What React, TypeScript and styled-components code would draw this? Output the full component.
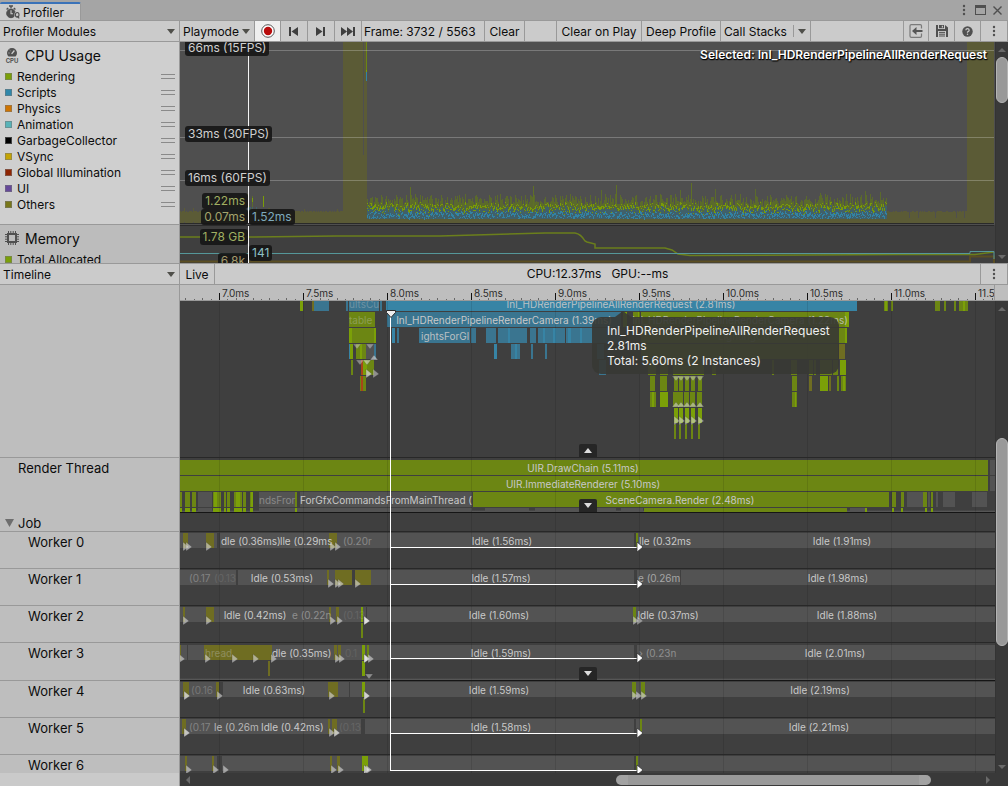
import React from "react";
import styled, { createGlobalStyle, css } from "styled-components";

const C = {
  green: "#6c8613",
  lime: "#7ba008",
  olive: "#6f6d22",
  idle: "#535353",
  bg: "#3f3f3f",
  blue: "#3a7590",
  sky: "#3784a5",
  red: "#a8451a",
  line: "#999999",
  bar: "#cbcbcb",
};

const Global = createGlobalStyle`
  * { box-sizing: border-box; }
  html, body { margin: 0; padding: 0; }
  body { font-family: Inter, "Liberation Sans", sans-serif; font-size: 12px; color: #0c0c0c; background: #3f3f3f; overflow: hidden; }
  button, select { font: inherit; color: inherit; margin: 0; border: 0; background: none; }
  svg { display: block; }
`;

/* ---------- window frame ---------- */
const Window = styled.main`
  display: flex;
  flex-direction: column;
  height: 100vh;
  min-width: 900px;
`;
const TabBar = styled.header`
  display: flex;
  justify-content: space-between;
  height: 20px;
  flex: none;
  background: #a5a5a5;
`;
const Tab = styled.button`
  display: flex;
  align-items: center;
  gap: 3px;
  width: 81px;
  margin-top: 2px;
  padding: 0 0 0 6px;
  background: ${C.bar};
  border-top: 2px solid #3a72b8;
  border-right: 1px solid ${C.line};
  border-radius: 2px 2px 0 0;
`;
const WindowButtons = styled.div`
  display: flex;
  align-items: center;
  gap: 6px;
  padding-right: 5px;
`;
const PlainButton = styled.button`
  display: flex;
  align-items: center;
  justify-content: center;
  padding: 0;
  min-width: 11px;
`;

/* ---------- toolbars ---------- */
const Toolbar = styled.div`
  display: flex;
  height: 22px;
  flex: none;
  background: ${C.bar};
  border-top: 1px solid ${C.line};
  border-bottom: 1px solid ${C.line};
`;
const ToolButton = styled.button<{ $w: number; $on?: boolean }>`
  display: flex;
  align-items: center;
  justify-content: center;
  width: ${(p) => p.$w}px;
  padding: 0;
  white-space: nowrap;
  border-right: 1px solid ${C.line};
  background: ${(p) => (p.$on ? "#efefef" : "transparent")};
`;
const Readout = styled.div`
  width: 123px;
  padding-left: 2px;
  line-height: 21px;
  white-space: nowrap;
  border-right: 1px solid ${C.line};
`;
const Filler = styled.div<{ $w?: number }>`
  ${(p) => (p.$w ? css`width: ${p.$w}px;` : css`flex: 1;`)}
  border-right: 1px solid ${C.line};
`;
const SelectBox = styled.label<{ $w: number }>`
  display: flex;
  align-items: center;
  width: ${(p) => p.$w}px;
  padding-right: 4px;
  border-right: 1px solid ${C.line};
`;
const Select = styled.select`
  appearance: none;
  flex: 1;
  min-width: 0;
  height: 20px;
  padding: 0 0 0 3px;
  outline: none;
`;
const CaretButton = styled.button`
  display: flex;
  align-items: center;
  width: 17px;
  padding: 0 0 0 4px;
  border-right: 1px solid ${C.line};
`;
const SplitButton = styled.button`
  position: relative;
  width: 73px;
  padding: 0 0 0 3px;
  text-align: left;
  white-space: nowrap;
  &::after {
    content: "";
    position: absolute;
    right: 0;
    top: 4px;
    bottom: 4px;
    border-right: 1px solid ${C.line};
  }
`;
const Summary = styled.div`
  flex: 1;
  text-align: center;
  line-height: 20px;
  white-space: pre;
  border-right: 1px solid ${C.line};
`;

/* ---------- module area ---------- */
const Modules = styled.section`
  display: flex;
  height: 221px;
  flex: none;
`;
const ModuleList = styled.div`
  flex: 1;
  min-width: 0;
  overflow: hidden;
`;
const Module = styled.article<{ $h: number; $selected?: boolean }>`
  display: flex;
  height: ${(p) => p.$h}px;
  background: ${(p) => (p.$selected ? "#cfcfcf" : "#bcbcbc")};
`;
const Legend = styled.div<{ $line?: boolean }>`
  width: 180px;
  flex: none;
  padding-left: 5px;
  border-right: 1px solid ${C.line};
  border-bottom: ${(p) => (p.$line ? `1px solid ${C.line}` : "0")};
`;
const ModuleTitle = styled.h2`
  display: flex;
  align-items: center;
  gap: 6px;
  height: 26px;
  margin: 0;
  font-size: 14px;
  font-weight: 400;
`;
const Series = styled.div`
  display: flex;
  align-items: center;
  height: 16px;
  gap: 5px;
  padding-right: 4px;
`;
const Swatch = styled.i<{ $c: string }>`
  width: 7px;
  height: 7px;
  background: ${(p) => p.$c};
  border: 1px solid #77777788;
`;
const SeriesName = styled.span`
  flex: 1;
  white-space: nowrap;
`;
const Grip = styled.i`
  width: 14px;
  height: 5px;
  border: solid #8a8a8a;
  border-width: 1px 0;
`;
const ChartBox = styled.div<{ $bg: string }>`
  position: relative;
  flex: 1;
  min-width: 0;
  overflow: hidden;
  background: ${(p) => p.$bg};
`;
const Badge = styled.span<{ $x: number; $y: number; $c?: string; $left?: boolean }>`
  position: absolute;
  top: ${(p) => p.$y}px;
  ${(p) => (p.$left ? css`right: calc(100% - ${p.$x}px);` : css`left: ${p.$x}px;`)}
  height: 16px;
  line-height: 16px;
  padding: 0 3px;
  border-radius: 3px;
  background: #161616e8;
  color: ${(p) => p.$c || "#d0d0d0"};
  white-space: nowrap;
`;
const SelectedName = styled.strong`
  position: absolute;
  top: 5px;
  right: 8px;
  line-height: 16px;
  font-weight: 600;
  color: #fff;
  text-shadow: 1px 1px 1px #000, 0 1px 1px #000;
`;

/* ---------- scrollbars ---------- */
const VScroll = styled.div`
  display: flex;
  flex-direction: column;
  align-items: flex-end;
  width: 13px;
  flex: none;
  position: relative;
  background: #393939;
  border-left: 1px solid #343434;
`;
const Arrow = styled.i<{ $d: "up" | "down" | "left" | "right" }>`
  width: 0;
  height: 0;
  border: 4px solid transparent;
  ${(p) => p.$d === "up" && css`border-width: 0 4px 4px; border-bottom-color: #6a6a6a; margin: 6px 2px 5px;`}
  ${(p) => p.$d === "down" && css`border-width: 4px 4px 0; border-top-color: #6a6a6a; margin: auto 2px 4px;`}
  ${(p) => p.$d === "left" && css`border-width: 4px 4px 4px 0; border-right-color: #6a6a6a; margin-left: 6px;`}
  ${(p) => p.$d === "right" && css`border-width: 4px 0 4px 4px; border-left-color: #6a6a6a; margin-right: 5px;`}
`;
const VThumb = styled.div<{ $top: string; $h: string }>`
  position: absolute;
  top: ${(p) => p.$top};
  right: 0;
  width: 12px;
  height: ${(p) => p.$h};
  border-radius: 6px;
  border: 1px solid #b4b4b4;
  background: #999;
`;
const HScroll = styled.div`
  position: relative;
  display: flex;
  flex: 1;
  align-items: center;
  justify-content: space-between;
`;
const HThumb = styled.div`
  position: absolute;
  left: 53.5%;
  top: 2px;
  width: 38.7%;
  height: 10px;
  border-radius: 5px;
  border: solid #a2a2a2;
  border-width: 0 12px;
  background: #999;
`;

/* ---------- timeline ---------- */
const RulerRow = styled.div`
  display: flex;
  height: 16px;
  flex: none;
  background: #bebebe;
`;
const RulerGutter = styled.div`
  width: 180px;
  border-right: 1px solid ${C.line};
`;
const Ruler = styled.div`
  flex: 1;
  min-width: 0;
  border-bottom: 1px solid ${C.line};
  border-right: 1px solid ${C.line};
`;
const Corner = styled.div`
  width: 13px;
  border-bottom: 1px solid ${C.line};
`;
const Body = styled.section`
  display: flex;
  flex: 1;
  min-height: 0;
`;
const Tracks = styled.div`
  position: relative;
  flex: 1;
  min-width: 0;
  overflow: hidden;
`;
const Track = styled.div<{ $h: number }>`
  display: flex;
  height: ${(p) => p.$h}px;
`;
const TrackLabel = styled.div<{ $indent: number; $line?: boolean }>`
  display: flex;
  align-items: flex-start;
  width: 180px;
  flex: none;
  padding: 1px 0 0 ${(p) => p.$indent}px;
  line-height: 18px;
  font-size: 13px;
  white-space: nowrap;
  background: #bebebe;
  border-right: 1px solid ${C.line};
  border-bottom: ${(p) => (p.$line === false ? "0" : `1px solid ${C.line}`)};
`;
const Fold = styled.button`
  padding: 0;
  margin: 5px 4px 0 5px;
`;
const Lane = styled.div<{ $heavy?: boolean }>`
  position: relative;
  flex: 1;
  min-width: 0;
  background: ${(p) => (p.$heavy ? `linear-gradient(transparent calc(100% - 2px), #5e5e5e) ${C.bg}` : C.bg)};
  border-bottom: 1px solid ${(p) => (p.$heavy ? "#151515" : "#282828")};
`;
const Expander = styled.button`
  position: absolute;
  z-index: 2;
  left: 50%;
  bottom: 0;
  width: 18px;
  height: 13px;
  margin-left: -9px;
  padding: 0;
  display: flex;
  align-items: center;
  justify-content: center;
  background: #262626;
  border-radius: 2px 2px 0 0;
`;
const Overlay = styled.svg`
  position: absolute;
  inset: 0;
  z-index: 1;
  pointer-events: none;
`;
const Tooltip = styled.div`
  position: absolute;
  z-index: 3;
  left: 592px;
  top: 16px;
  padding: 6px 9px 6px 15px;
  line-height: 15px;
  color: #f0f0f0;
  background: #383935e8;
  border-radius: 9px;
  white-space: nowrap;
  &::before {
    content: "";
    position: absolute;
    left: 23px;
    top: -6px;
    border: solid transparent;
    border-width: 0 8px 6px;
    border-bottom-color: #383935e8;
  }
`;
const Footer = styled.footer`
  display: flex;
  height: 13px;
  flex: none;
  background: #393939;
`;
const FooterGutter = styled.div`
  width: 180px;
  background: #cacaca;
  border-right: 1px solid ${C.line};
`;
const FooterCorner = styled.div`
  width: 13px;
`;

/* ---------- small drawings ---------- */
const Caret = ({ up, fill = "#4f4f4a" }: { up?: boolean; fill?: string }) => (
  <svg width="8" height="5" aria-hidden>
    <path d={up ? "M0 5 4 0 8 5Z" : "M0 0H8L4 5Z"} fill={fill} />
  </svg>
);
const Dots = () => (
  <svg width="4" height="12" fill="#4f4f4f" aria-hidden>
    <circle cx="2" cy="2" r="1.2" /><circle cx="2" cy="6" r="1.2" /><circle cx="2" cy="10" r="1.2" />
  </svg>
);
const ProfilerIcon = () => (
  <svg width="14" height="15" viewBox="0 0 14 15" fill="none" stroke="#4f4f4f" aria-hidden>
    <circle cx="5" cy="8.4" r="4.3" fill="#4f4f4f" />
    <path d="M3 1h4M5 1.300v2M.6 4.600 2.200 3M9.400 4.600 7.800 3" strokeWidth="1.4" />
    <path d="M5 5.200v3.600h2" stroke="#cbcbcb" strokeWidth="1.1" />
    <ellipse cx="11.200" cy="9.800" rx="2.800" ry="3.400" fill="#cbcbcb" stroke="none" />
    <ellipse cx="11.200" cy="9.800" rx="1.800" ry="2.300" strokeWidth="1.1" />
    <path d="M11.200 11 13.200 13.400" strokeWidth="1.1" />
  </svg>
);
const CpuIcon = () => (
  <svg width="14" height="16" viewBox="0 0 14 16" overflow="visible" aria-hidden>
    <path d="M3.500 9.500A5 5 0 1 1 10.500 9.500Z" fill="#505050" />
    <path d="M6.600 6.900 9.400 3.500" stroke="#cfcfcf" strokeWidth="1.300" />
    <path d="M3.400 6h1.200M4.700 3l.7.7" stroke="#cfcfcf" strokeWidth=".8" />
    <text x="7" y="15.500" fontSize="6" fontWeight="700" textAnchor="middle" fill="#505050">CPU</text>
  </svg>
);
const MemoryIcon = () => (
  <svg width="14" height="14" viewBox="0 0 14 14" fill="none" stroke="#505050" aria-hidden>
    <rect x="3" y="3" width="8" height="8" strokeWidth="2" />
    <path d="M3.500 0V2.400M5.800 0V2.400M8.200 0V2.400M10.500 0V2.400M3.500 11.600V14M5.800 11.600V14M8.200 11.600V14M10.500 11.600V14M0 3.500H2.400M0 5.800H2.400M0 8.200H2.400M0 10.500H2.400M11.600 3.500H14M11.600 5.800H14M11.600 8.200H14M11.600 10.500H14" />
  </svg>
);
const RecordIcon = () => (
  <svg width="14" height="14" viewBox="0 0 14 14" aria-hidden>
    <circle cx="7" cy="7" r="6.3" fill="#fff" stroke="#555" />
    <circle cx="7" cy="7" r="4.2" fill="#b80c0c" />
  </svg>
);
const StepIcon = ({ kind }: { kind: "prev" | "next" | "last" }) => (
  <svg width={kind === "last" ? 14 : 10} height="9" fill="#3f3f3f" aria-hidden>
    {kind === "prev" && <path d="M0 0H2V9H0ZM9 0V9L2.5 4.5Z" />}
    {kind === "next" && <path d="M0 0V9L6.5 4.5ZM7 0H9V9H7Z" />}
    {kind === "last" && <path d="M0 0V9L6 4.5ZM6 0V9L12 4.5ZM12 0H14V9H12Z" />}
  </svg>
);
const LoadIcon = () => (
  <svg width="14" height="14" viewBox="0 0 14 14" fill="none" stroke="#555" aria-hidden>
    <path d="M12.5 4.5V2Q12.5.7 11.2.7H2.3Q1 .7 1 2V12Q1 13.3 2.3 13.3H11.2Q12.5 13.3 12.5 12V9.5" stroke="#7a7a7a" strokeWidth="1.2" />
    <path d="M13.5 7H6" strokeWidth="2" /><path d="M3 7 7.5 3V11Z" fill="#555" stroke="none" />
  </svg>
);
const SaveIcon = () => (
  <svg width="12" height="12" viewBox="0 0 12 12" aria-hidden>
    <path d="M0 0H2V4H9V0L12 2.5V12H0Z" fill="#505050" />
    <path d="M3 0H8V3.2H3Z" fill="#505050" /><path d="M5.8 .8H7V2.6H5.8Z" fill="#cbcbcb" />
    <path d="M2 6H10V12H2Z" fill="#cbcbcb" /><path d="M3 7.4H9M3 9.2H9M3 11H9" stroke="#505050" />
  </svg>
);
const HelpIcon = () => (
  <svg width="11" height="11" viewBox="0 0 11 11" aria-hidden>
    <circle cx="5.5" cy="5.5" r="5.2" fill="#505050" />
    <path d="M3.8 4.3Q3.9 2.7 5.5 2.7T7.2 4.2Q7.2 5 5.5 6V6.8" fill="none" stroke="#cbcbcb" strokeWidth="1.2" />
    <circle cx="5.5" cy="8.3" r=".75" fill="#cbcbcb" />
  </svg>
);

/* ---------- charts ---------- */
const rng = (seed: number) => () => {
  seed = (seed * 1664525 + 1013904223) % 4294967296;
  return seed / 4294967296;
};

function buildCpu() {
  const r = rng(7);
  const out = { base: "", dimGreen: "", dimBlue: "", lime: "", blue: "" };
  const col = (x: number, y: number, h: number) => `M${x} ${y}h1v${h}h-1z`;
  for (let x = 180; x < 343; x++) {
    out.base += col(x, 211 + Math.floor(r() * 2) - (r() > 0.93 ? 3 : 0), 14);
    if (x > 222 && x < 258 && r() > 0.35) {
      const y = 194 + Math.floor(r() * 14);
      out.dimGreen += col(x, y, 212 - y);
      out.dimBlue += col(x, 207, 8);
      if (x > 248 && r() > 0.4) out.lime += col(x, y + 2, 4);
    }
  }
  out.lime += col(263, 196, 11);
  for (let x = 367; x < 887; x++) {
    const phase = (x % 5) / 5;
    let top = 194 + Math.floor(r() * 9) + Math.floor(phase * 7);
    if (r() > 0.95) top -= 5;
    const g = 202 + Math.floor(phase * 4 + r() * 6);
    const b = 211 + Math.floor(phase * 3 + r() * 4);
    out.base += col(x, 214 + Math.floor(r() * 4), 10);
    out.dimGreen += col(x, top, 215 - top);
    out.dimBlue += col(x, g + 3, 219 - g - 3);
    out.lime += col(x, g, r() > 0.6 ? 3 : 1);
    if (r() > 0.6) out.lime += col(x, g + 5, 1);
    out.blue += col(x, b, 1 + Math.floor(r() * 3));
    if (r() > 0.5) out.blue += col(x, 216 + Math.floor(r() * 3), 1);
  }
  for (let x = 887; x < 967; x++) {
    out.base += col(x, r() > 0.96 ? 218 : 211 + Math.floor(r() * 2), 14);
  }
  return out;
}
const cpu = buildCpu();

const GUTTER = 180;

const CpuChart = () => (
  <svg width="100%" height="182" shapeRendering="crispEdges" aria-label="CPU usage chart">
    <g transform={`translate(${-GUTTER} -42)`}>
      <path d="M343 42H363V224H343ZM364 42H367V224H364ZM967 42H994V224H967ZM363 155H364V224H363Z" fill="#5b5b36" />
      <path d={cpu.base} fill="#5b5b36" />
      <path d={cpu.dimGreen} fill="#5b6a2c" />
      <path d={cpu.dimBlue} fill="#40606a" />
      <path d={cpu.lime} fill="#7a9c06" />
      <path d={cpu.blue} fill="#3283a4" />
      <path d="M366 42h1v28h-1z" fill="#6c8613" />
      <path d="M366 70h1v2h-1z" fill="#7ba008" />
      <path d="M366 72h1v9h-1z" fill="#3283a4" />
      <path d="M410 187h1v18h-1zM533 186h1v20h-1zM616 185h1v20h-1zM691 183h1v20h-1z" fill="#5f7026" />
      <path d="M180 50.5H994M180 137.5H994M180 180.5H994" stroke="#ffffff" strokeOpacity=".24" />
      <path d="M248 42h1v182h-1z" fill="#f4f4f4" />
      <path d="M180 223.5H994" stroke="#2a2a2a" />
    </g>
  </svg>
);

const MemoryChart = () => (
  <svg width="100%" height="38" fill="none" aria-label="Memory chart">
    <g transform={`translate(${-GUTTER} -224)`}>
      <path d="M180 224.5H994" stroke="#2a2a2a" />
      <path d="M180 260.5H970V255.5H994V262" stroke="#5b4e22" strokeWidth="2" />
      <path d="M180 236 248 236 336 235 440 235 545 232 575 232Q581 233 585 240L587 241 595 243V247H665L672 249 678 253 690 254.500 900 253.500 975 253.500 994 251" stroke="#6b7f1c" strokeWidth="1.500" />
      <path d="M180 252.500H970V250.500H994V258" stroke="#55979a" />
      <path d="M248 225h1v38h-1z" fill="#f4f4f4" />
    </g>
  </svg>
);

const majors = ["7.0ms", "7.5ms", "8.0ms", "8.5ms", "9.0ms", "9.5ms", "10.0ms", "10.5ms", "11.0ms", "11.5ms"];
const majorX = (i: number) => 39 + i * 84;

const RulerScale = () => (
  <svg width="100%" height="15" shapeRendering="crispEdges">
    {Array.from({ length: 110 }, (_, i) => {
      const x = Math.round(39 - 42 + i * 8.4);
      return i % 10 === 5 ? null : <path key={i} d={`M${x + 0.5} 15v${i % 2 ? -2 : -1}`} stroke="#666" />;
    })}
    {majors.map((m, i) => (
      <React.Fragment key={m}>
        <path d={`M${majorX(i) + 0.5} 8v7`} stroke="#111" />
        <text x={majorX(i) + 3} y="12" fontSize="10" fill="#2c2c2c">{m}</text>
      </React.Fragment>
    ))}
  </svg>
);

/* A bar is [start, end, depth, colour]; a label is [x, depth, text, opacity, anchor]. */
type Bar = [number, number, number, string];
type Label = [number, number, string, number?, "middle"?];
type Mark = [number, number, ("r" | "d" | "u")?, number?];

const Events = ({ h, top, bars, labels = [], marks = [], tails = [] }: {
  h: number; top: number; bars: Bar[]; labels?: Label[]; marks?: Mark[]; tails?: [number, number, number, number, string][];
}) => (
  <svg width="100%" height={h - 1}>
    <g transform={`translate(${-GUTTER} 0)`}>
      <g shapeRendering="crispEdges">
        {bars.map(([a, b, d, c], i) => (
          <rect key={i} x={a} y={top + d * 16} width={b - a} height="15" fill={c} />
        ))}
        {tails.map(([a, b, y, th, c], i) => (
          <rect key={i} x={a} y={y} width={b - a} height={th} fill={c} />
        ))}
        {majors.map((m, i) => (
          <path key={m} d={`M${majorX(i) + GUTTER + 0.5} 0V${h}`} stroke="#000" strokeOpacity=".1" />
        ))}
      </g>
      {labels.map(([x, d, t, o = 1, anchor], i) => (
        <text key={i} x={x} y={top + d * 16 + 12} fontSize="10" fill="#c9c9c9" opacity={o} textAnchor={anchor || "start"}>{t}</text>
      ))}
      {marks.map(([x, y, dir = "r", o = 0.6], i) => (
        <path
          key={i}
          d={dir === "r" ? `M${x} ${y - 5}l6 5-6 4z` : dir === "d" ? `M${x - 4} ${y - 2}h8l-4 5z` : `M${x - 4} ${y + 3}h8l-4-5z`}
          fill="#dedede" stroke="#333" strokeOpacity=".5" strokeWidth=".6" opacity={o}
        />
      ))}
    </g>
  </svg>
);

const { green: G, lime: L, olive: O, idle: I, blue: B, sky: S, red: R } = C;

const clusterX = [674, 679, 685, 691, 698];
const mainBars: Bar[] = [
  [300, 303, 0, L], [312, 314, 0, O], [314, 329, 0, B], [346, 348, 0, B], [349, 379, 0, B], [380, 382, 0, B], [386, 857, 0, S],
  [884, 888, 0, G], [885, 887, 0, L], [891, 893, 0, G], [935, 940, 0, G], [944, 946, 0, G], [954, 956, 0, G], [959, 968, 0, G], [963, 965, 0, L],
  [349, 375, 1, G], [387, 621, 1, B], [623, 627, 1, L], [633, 640, 1, G], [638, 639, 1, L], [641, 849, 1, G], [845, 849, 1, L],
  [349, 376, 2, G], [349, 352, 2, L], [374, 376, 2, L], [392, 395, 2, S], [397, 399, 2, B], [419, 470, 2, B], [471, 476, 2, B], [486, 496, 2, B], [498, 527, 2, B], [508, 510, 2, S],
  [530, 536, 2, B], [538, 565, 2, B], [543, 545, 2, S], [553, 556, 2, S], [566, 620, 2, B], [568, 571, 2, S], [580, 582, 2, S], [641, 847, 2, G], [845, 847, 2, L],
  [349, 350, 3, S], [350, 353, 3, L], [356, 366, 3, G], [360, 362, 3, L], [366, 374, 3, I], [374, 376, 3, B], [494, 497, 3, S], [511, 520, 3, B], [515, 517, 3, S], [531, 533, 3, B], [545, 547, 3, B],
  [597, 604, 3, B], [641, 838, 3, G], [839, 845, 3, O],
  [351, 353, 4, G], [361, 363, 4, R], [363, 367, 4, L], [367, 374, 4, G], [599, 606, 4, B], [648, 656, 4, G], [660, 668, 4, G], [673, 704, 4, G], [712, 716, 4, G],
  [772, 774, 4, G], [791, 797, 4, G], [809, 813, 4, G], [814, 816, 4, G], [820, 832, 4, G], [833, 838, 4, G], [840, 846, 4, L],
  [360, 361, 5, G], [361, 363, 5, R], [363, 366, 5, G], [650, 655, 5, G], [660, 667, 5, G], [792, 797, 5, G], [809, 812, 5, O], [820, 828, 5, L], [829, 831, 5, O], [837, 839, 5, G], [841, 846, 5, G], [843, 845, 5, L],
  [650, 656, 6, G], [652, 654, 6, L], [660, 668, 6, L], [792, 797, 6, G], [795, 796, 6, L],
  ...clusterX.flatMap((x): Bar[] => [[x, x + 4, 5, G], [x - 1, x + 4, 6, G], [x, x + 4, 7, L], [x, x + 2, 8, G]]),
];
const mainLabels: Label[] = [
  [349, 0, "ultsCu", 0.35], [621, 0, "Inl_HDRenderPipelineAllRenderRequest (2.81ms)", 0.9, "middle"],
  [349, 1, "table", 0.35], [504, 1, "Inl_HDRenderPipelineRenderCamera (1.39ms)", 1, "middle"], [740, 1, "Inl_HDRenderPipelineRenderCamera (1.22ms)", 0.8, "middle"],
  [421, 2, "ightsForGl", 0.9], [718, 2, "LightingCo", 0.5],
];
const mainMarks: Mark[] = [
  [357, 45, "d", 0.45], [370, 45, "d", 0.45], [374, 56, "u", 0.6], [360, 61, "d", 0.45], [367, 61, "d", 0.6], [366, 73, "r", 0.7], [373, 73, "r", 0.5],
  ...clusterX.flatMap((x): Mark[] => [[x + 2, 77, "d", 0.45], [x + 2, 103, "u", 0.55], [x, 120, "r", 0.55]]),
];

const renderGreens: [number, number][] = [[180, 182], [185, 190], [192, 196], [213, 221], [224, 226], [227, 230], [234, 242], [243, 246], [250, 253], [295, 297], [892, 896], [901, 904], [923, 927], [931, 933]];
const renderBars: Bar[] = [
  [180, 988, 0, G], [990, 2400, 0, I], [180, 988, 1, G], [990, 2400, 1, I],
  [198, 212, 2, I], [259, 295, 2, I], [300, 472, 2, I], [473, 889, 2, G], [907, 923, 2, I], [928, 930, 2, I], [936, 938, 2, I], [943, 955, 2, I], [972, 987, 2, I],
  ...renderGreens.map(([a, b]): Bar => [a, b, 2, G]),
  [214, 217, 2, L], [236, 240, 2, L], [251, 253, 2, L],
  [198, 212, 3, I], [259, 472, 3, I], [485, 529, 3, I], [535, 616, 3, I], [621, 643, 3, I], [644, 847, 3, G], [850, 865, 3, I], [865, 867, 3, L], [892, 894, 3, L], [901, 903, 3, L], [925, 927, 3, L], [931, 933, 3, L],
  ...renderGreens.slice(0, 10).map(([a, b]): Bar => [a, b, 3, L]),
];

interface Worker {
  h: number; top: number; bars: Bar[]; labels: Label[]; marks: Mark[]; flow?: boolean; tails?: [number, number, number, number, string][];
}
const END = 2400;
const gap = C.bg;
const workers: Worker[] = [
  {
    h: 37, top: 1, flow: true,
    bars: [[180, END, 0, I], [183, 188, 0, O], [206, 214, 0, O], [217, 220, 0, gap], [329, 337, 0, O], [634, 636, 0, gap], [636, 638, 0, G]],
    labels: [[221, 0, "dle (0.36ms)"], [280, 0, "lle (0.29ms"], [343, 0, "(0.20r", 0.45], [502, 0, "Idle (1.56ms)", 1, "middle"], [639, 0, "lle (0.32ms"], [842, 0, "Idle (1.91ms)", 1, "middle"]],
    marks: [[183, 15], [186, 15], [206, 15], [330, 15], [335, 15]],
  },
  {
    h: 37, top: 1, flow: true,
    bars: [[180, END, 0, I], [236, 238, 0, gap], [327, 329, 0, O], [335, 352, 0, O], [352, 355, 0, gap], [355, 371, 0, O], [634, 637, 0, gap], [680, 681, 0, gap]],
    labels: [[189, 0, "(0.17", 0.4], [214, 0, "(0.13", 0.15], [282, 0, "Idle (0.53ms)", 1, "middle"], [501, 0, "Idle (1.57ms)", 1, "middle"], [638, 0, "e (0.26m", 0.7], [838, 0, "Idle (1.98ms)", 1, "middle"]],
    marks: [[328, 15], [335, 15], [338, 15], [355, 15]],
  },
  {
    h: 37, top: 1,
    bars: [[180, END, 0, I], [183, 185, 0, O], [206, 214, 0, O], [329, 331, 0, O], [336, 339, 0, O], [361, 363, 0, L], [366, 367, 0, gap], [633, 636, 0, G]],
    labels: [[255, 0, "Idle (0.42ms)", 1, "middle"], [292, 0, "e (0.22n", 0.5], [343, 0, "(0.13", 0.15], [499, 0, "Idle (1.60ms)", 1, "middle"], [668, 0, "Idle (0.37ms)", 1, "middle"], [847, 0, "Idle (1.88ms)", 1, "middle"]],
    marks: [[183, 15], [206, 15], [330, 15], [337, 15], [364, 15, "r", 1], [633, 15], [637, 15, "r", 0.5]],
    tails: [[361, 363, 17, 15, G]],
  },
  {
    h: 38, top: 2, flow: true,
    bars: [[180, 187, 0, I], [180, 181, 0, O], [188, 204, 0, I], [204, 272, 0, O], [272, END, 0, I], [334, 337, 0, O], [338, 341, 0, O], [362, 365, 0, L], [367, 369, 0, G], [634, 637, 0, gap]],
    labels: [[205, 0, "hread", 0.35], [272, 0, "dle (0.35ms)"], [345, 0, "0.1", 0.12], [501, 0, "Idle (1.59ms)", 1, "middle"], [639, 0, "› (0.23n", 0.5], [835, 0, "Idle (2.01ms)", 1, "middle"]],
    marks: [[179, 16], [205, 16], [232, 16], [253, 16], [271, 16], [335, 16], [339, 16], [364, 16, "r", 1], [368, 16, "r", 0.6], [369, 33, "d", 0.5]],
    tails: [[268, 270, 18, 15, O], [362, 365, 18, 15, L]],
  },
  {
    h: 37, top: 1,
    bars: [[180, END, 0, I], [183, 189, 0, O], [216, 219, 0, O], [219, 223, 0, gap], [328, 338, 0, O], [349, 350, 0, gap], [362, 365, 0, L], [632, 636, 0, G], [641, 645, 0, G]],
    labels: [[191, 0, "(0.16", 0.3], [274, 0, "Idle (0.63ms)", 1, "middle"], [499, 0, "Idle (1.59ms)", 1, "middle"], [820, 0, "Idle (2.19ms)", 1, "middle"]],
    marks: [[184, 15, "r", 0.8], [217, 15], [329, 15], [364, 15, "r", 0.9], [632, 15], [636, 15], [641, 15]],
    tails: [[363, 365, 17, 15, G]],
  },
  {
    h: 37, top: 1, flow: true,
    bars: [[180, END, 0, I], [182, 186, 0, O], [328, 330, 0, O], [332, 337, 0, O], [361, 365, 0, gap], [634, 636, 0, gap], [640, 642, 0, G]],
    labels: [[189, 0, "(0.17", 0.4], [214, 0, "le (0.26m", 0.85], [261, 0, "Idle (0.42ms)"], [339, 0, "(0.13", 0.15], [501, 0, "Idle (1.58ms)", 1, "middle"], [819, 0, "Idle (2.21ms)", 1, "middle"]],
    marks: [[184, 15, "r", 0.8], [329, 15], [334, 15, "r", 0.8]],
  },
  {
    h: 37, top: 1, flow: true,
    bars: [[180, END, 0, I], [185, 187, 0, O], [212, 214, 0, O], [217, 222, 0, gap], [330, 332, 0, O], [337, 340, 0, O], [362, 368, 0, L], [634, 636, 0, gap], [636, 638, 0, G]],
    labels: [],
    marks: [[186, 15], [213, 15], [223, 15], [331, 15], [338, 15], [364, 15, "r", 0.9], [366, 15, "r", 0.7]],
  },
];

/* y of each worker's flow arrow, measured from the top of the track list */
const MAIN_H = 157, RENDER_H = 55, JOB_H = 19;
const flowYs: number[] = [];
workers.reduce((y, w) => {
  if (w.flow) flowYs.push(y + 15);
  return y + w.h;
}, MAIN_H + RENDER_H + JOB_H);

const FlowLines = () => (
  <Overlay width="100%" height="100%">
    <path d={`M390.5 12V${flowYs[flowYs.length - 1] + 1}`} stroke="#fff" />
    {flowYs.map((y) => (
      <g key={y}>
        <path d={`M390 ${y + 0.5}H637`} stroke="#fff" />
        <path d={`M637 ${y - 5}l6 5-6 5z`} fill="#fff" stroke="#333" strokeWidth=".8" />
      </g>
    ))}
    <path d="M386.500 9.500h9v2l-4.500 5-4.500-5z" fill="#eee" stroke="#2c2c2c" strokeWidth="1" />
  </Overlay>
);

const cpuSeries: [string, string][] = [
  ["Rendering", "#7ba008"], ["Scripts", "#2f87aa"], ["Physics", "#cf7400"], ["Animation", "#58b3b8"], ["GarbageCollector", "#000"],
  ["VSync", "#c4a404"], ["Global Illumination", "#8f2503"], ["UI", "#66499a"], ["Others", "#78771a"],
];

export default function App() {
  return (
    <Window>
      <Global />
      <TabBar>
        <Tab><ProfilerIcon />Profiler</Tab>
        <WindowButtons>
          <PlainButton aria-label="Menu"><Dots /></PlainButton>
          <PlainButton aria-label="Maximize">
            <svg width="11" height="10" fill="none" stroke="#4f4f4f"><rect x=".5" y=".5" width="10" height="9" /><path d="M0 2H11" strokeWidth="2" /></svg>
          </PlainButton>
          <PlainButton aria-label="Close">
            <svg width="9" height="9" stroke="#4f4f4f" strokeWidth="1.400"><path d="M.5.5 8.500 8.500M8.500.5.5 8.500" /></svg>
          </PlainButton>
        </WindowButtons>
      </TabBar>

      <Toolbar>
        <SelectBox $w={180}>
          <Select aria-label="Modules"><option>Profiler Modules</option></Select>
          <Caret />
        </SelectBox>
        <SelectBox $w={75}>
          <Select aria-label="Target"><option>Playmode</option></Select>
          <Caret />
        </SelectBox>
        <ToolButton $w={26} $on aria-label="Record"><RecordIcon /></ToolButton>
        <ToolButton $w={27} aria-label="Previous frame"><StepIcon kind="prev" /></ToolButton>
        <ToolButton $w={27} aria-label="Next frame"><StepIcon kind="next" /></ToolButton>
        <ToolButton $w={27} aria-label="Last frame"><StepIcon kind="last" /></ToolButton>
        <Readout>Frame: 3732 / 5563</Readout>
        <ToolButton $w={40}>Clear</ToolButton>
        <Filler $w={32} />
        <ToolButton $w={85}>Clear on Play</ToolButton>
        <ToolButton $w={79}>Deep Profile</ToolButton>
        <SplitButton>Call Stacks</SplitButton>
        <CaretButton aria-label="Call stack options"><Caret /></CaretButton>
        <Filler />
        <ToolButton $w={25} aria-label="Load"><LoadIcon /></ToolButton>
        <ToolButton $w={26} aria-label="Save"><SaveIcon /></ToolButton>
        <ToolButton $w={26} aria-label="Help"><HelpIcon /></ToolButton>
        <ToolButton $w={27} aria-label="More"><Dots /></ToolButton>
      </Toolbar>

      <Modules>
        <ModuleList>
          <Module $h={183} $selected>
            <Legend $line>
              <ModuleTitle><CpuIcon />CPU Usage</ModuleTitle>
              {cpuSeries.map(([name, c]) => (
                <Series key={name}><Swatch $c={c} /><SeriesName>{name}</SeriesName><Grip /></Series>
              ))}
            </Legend>
            <ChartBox $bg="#4f4f4f">
              <CpuChart />
              <Badge $x={5} $y={-2}>66ms (15FPS)</Badge>
              <Badge $x={5} $y={84}>33ms (30FPS)</Badge>
              <Badge $x={5} $y={128}>16ms (60FPS)</Badge>
              <Badge $x={68} $y={151} $left $c="#a0af62">1.22ms</Badge>
              <Badge $x={68} $y={167} $left $c="#a3a36c">0.07ms</Badge>
              <Badge $x={69} $y={167} $c="#7eaabd">1.52ms</Badge>
              <SelectedName>Selected: Inl_HDRenderPipelineAllRenderRequest</SelectedName>
            </ChartBox>
          </Module>
          <Module $h={38}>
            <Legend>
              <ModuleTitle><MemoryIcon />Memory</ModuleTitle>
              <Series><Swatch $c="#7ba008" /><SeriesName>Total Allocated</SeriesName></Series>
            </Legend>
            <ChartBox $bg={C.bg}>
              <MemoryChart />
              <Badge $x={68} $y={4} $left $c="#a0af62">1.78 GB</Badge>
              <Badge $x={69} $y={20} $c="#8fc0c4">141</Badge>
              <Badge $x={68} $y={28} $left $c="#a39a6c">6.8k</Badge>
            </ChartBox>
          </Module>
        </ModuleList>
        <VScroll>
          <Arrow $d="up" />
          <VThumb $top="15px" $h="46px" />
          <Arrow $d="down" />
        </VScroll>
      </Modules>

      <Toolbar>
        <SelectBox $w={180}>
          <Select aria-label="View"><option>Timeline</option></Select>
          <Caret />
        </SelectBox>
        <ToolButton $w={35}>Live</ToolButton>
        <Summary>{"CPU:12.37ms   GPU:--ms"}</Summary>
        <ToolButton $w={27} aria-label="View options"><Dots /></ToolButton>
      </Toolbar>

      <RulerRow>
        <RulerGutter />
        <Ruler><RulerScale /></Ruler>
        <Corner />
      </RulerRow>

      <Body>
        <Tracks>
          <Track $h={MAIN_H}>
            <TrackLabel $indent={18} />
            <Lane>
              <Events h={MAIN_H} top={-5} bars={mainBars} labels={mainLabels} marks={mainMarks} />
              <Expander aria-label="Collapse main thread"><Caret up fill="#ddd" /></Expander>
            </Lane>
          </Track>
          <Track $h={RENDER_H}>
            <TrackLabel $indent={18} $line={false}>Render Thread</TrackLabel>
            <Lane $heavy>
              <Events
                h={RENDER_H} top={2} bars={renderBars}
                labels={[[583, 0, "UIR.DrawChain (5.11ms)", 1, "middle"], [583, 1, "UIR.ImmediateRenderer (5.10ms)", 1, "middle"], [259, 2, "ndsFror", 0.45], [300, 2, "ForGfxCommandsFromMainThread ("], [680, 2, "SceneCamera.Render (2.48ms)", 1, "middle"]]}
              />
              <Expander aria-label="Expand render thread"><Caret fill="#ddd" /></Expander>
            </Lane>
          </Track>
          <Track $h={JOB_H}>
            <TrackLabel $indent={0}><Fold aria-label="Toggle Job group"><svg width="9" height="8"><path d="M0 0H9L4.500 8Z" fill="#6e6e6e" /></svg></Fold>Job</TrackLabel>
            <Lane><Events h={JOB_H} top={0} bars={[]} /></Lane>
          </Track>
          {workers.map((w, i) => (
            <Track key={i} $h={w.h}>
              <TrackLabel $indent={28}>Worker {i}</TrackLabel>
              <Lane $heavy={i === 3}>
                <Events {...w} />
                {i === 3 && <Expander aria-label="Expand worker 3"><Caret fill="#ddd" /></Expander>}
              </Lane>
            </Track>
          ))}
          <FlowLines />
          <Tooltip role="tooltip">
            Inl_HDRenderPipelineAllRenderRequest<br />2.81ms<br />Total: 5.60ms (2 Instances)
          </Tooltip>
        </Tracks>
        <VScroll>
          <Arrow $d="up" />
          <VThumb $top="29%" $h="44%" />
          <Arrow $d="down" />
        </VScroll>
      </Body>
      <Footer>
        <FooterGutter />
        <HScroll><Arrow $d="left" /><HThumb /><Arrow $d="right" /></HScroll>
        <FooterCorner />
      </Footer>
    </Window>
  );
}
